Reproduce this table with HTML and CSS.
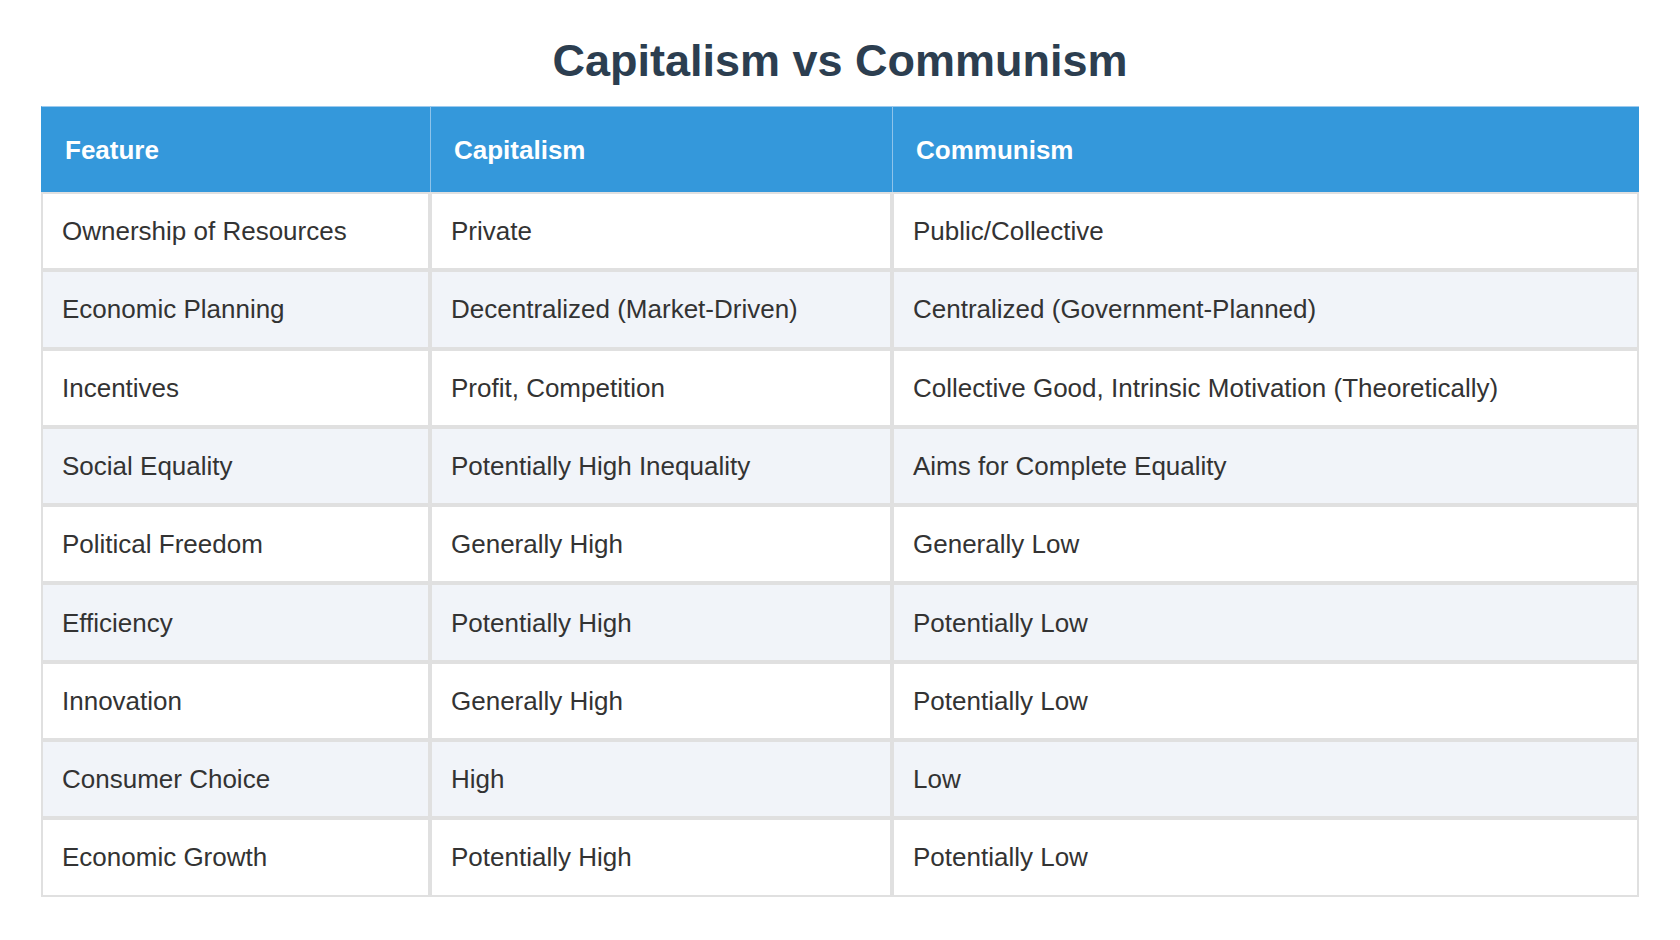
FILE: index.html
```html
<!DOCTYPE html>
<html lang="en">
<head>
<meta charset="utf-8">
<title>Capitalism vs Communism</title>
<link rel="stylesheet" href="styles.css">
</head>
<body>
<main class="page">
  <h1 class="title">Capitalism vs Communism</h1>
  <table class="compare">
    <colgroup>
      <col class="c1">
      <col class="c2">
      <col class="c3">
    </colgroup>
    <thead>
      <tr><th>Feature</th><th>Capitalism</th><th>Communism</th></tr>
    </thead>
    <tbody>
      <tr><td>Ownership of Resources</td><td>Private</td><td>Public/Collective</td></tr>
      <tr><td>Economic Planning</td><td>Decentralized (Market-Driven)</td><td>Centralized (Government-Planned)</td></tr>
      <tr><td>Incentives</td><td>Profit, Competition</td><td>Collective Good, Intrinsic Motivation (Theoretically)</td></tr>
      <tr><td>Social Equality</td><td>Potentially High Inequality</td><td>Aims for Complete Equality</td></tr>
      <tr><td>Political Freedom</td><td>Generally High</td><td>Generally Low</td></tr>
      <tr><td>Efficiency</td><td>Potentially High</td><td>Potentially Low</td></tr>
      <tr><td>Innovation</td><td>Generally High</td><td>Potentially Low</td></tr>
      <tr><td>Consumer Choice</td><td>High</td><td>Low</td></tr>
      <tr><td>Economic Growth</td><td>Potentially High</td><td>Potentially Low</td></tr>
    </tbody>
  </table>
</main>
</body>
</html>
```

FILE: styles.css
```css
html, body {
  margin: 0;
  padding: 0;
  background: #ffffff;
}

body {
  font-family: "Liberation Sans", Arial, Helvetica, sans-serif;
  color: #333333;
}

.page {
  padding: 34px 41px 0;
}

.title {
  margin: 0 0 18px;
  font-size: 45px;
  line-height: 54px;
  font-weight: 700;
  text-align: center;
  color: #2c3e50;
}

.compare {
  width: 100%;
  table-layout: fixed;
  border-collapse: separate;
  border-spacing: 0;
  font-size: 26px;
  line-height: 30px;
}

.c1 { width: 389px; }
.c2 { width: 462px; }

.compare th {
  background: #3498db;
  color: #ffffff;
  font-weight: 700;
  text-align: left;
  height: 86px;
  box-sizing: border-box;
  padding: 0 23px;
  border-top: 1px solid #9ccaee;
  border-left: 1px solid #3498db;
  vertical-align: middle;
}

.compare th + th {
  border-left: 1px solid #8ec3ea;
}

.compare td {
  padding: 22.15px 19px;
  border: 2px solid #e0e0e0;
  vertical-align: middle;
}

.compare tbody tr:nth-child(even) td {
  background: #f1f4f9;
}
```
